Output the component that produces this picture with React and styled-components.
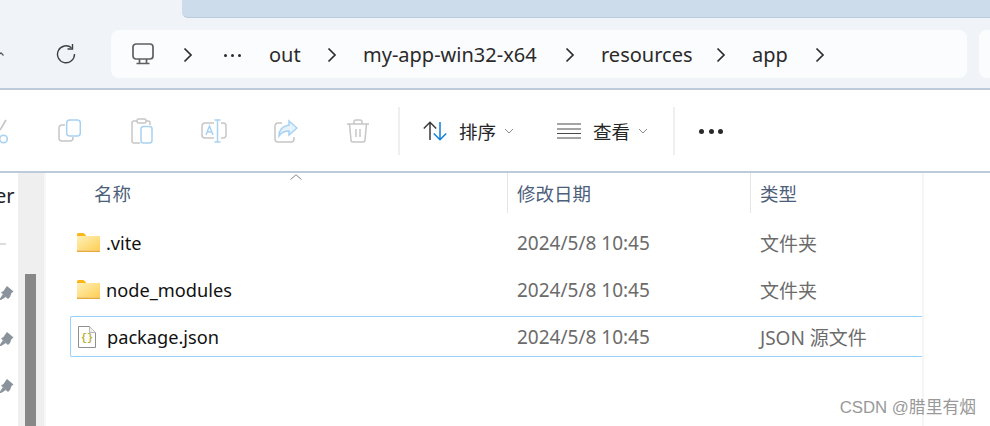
import React from 'react';
import styled, { createGlobalStyle } from 'styled-components';

const GlobalStyle = createGlobalStyle`
  html, body {
    margin: 0;
    padding: 0;
    background: #fff;
    overflow: hidden;
  }
  body {
    font-family: "Noto Sans", "Noto Sans CJK SC", sans-serif;
  }
`;

const crumbs = [
  { label: 'out', width: 32 },
  { label: 'my-app-win32-x64', width: 176 },
  { label: 'resources', width: 89 },
  { label: 'app', width: 37 },
];

const files = [
  { name: '.vite', type: '文件夹', kind: 'folder' },
  { name: 'node_modules', type: '文件夹', kind: 'folder' },
  { name: 'package.json', type: 'JSON 源文件', kind: 'json', selected: true },
];

const Chevron = () => (
  <svg width="10" height="16" viewBox="0 0 10 16" fill="none" stroke="#2b2b2b" strokeWidth="1.7">
    <path d="M1.5 1.5 8 8l-6.5 6.5" />
  </svg>
);

const Caret = () => (
  <CaretIcon width="10" height="6" viewBox="0 0 10 6" fill="none" stroke="#8a8a8a" strokeWidth="1">
    <path d="M1 1l4 4 4-4" />
  </CaretIcon>
);

const Folder = ({ id }) => (
  <svg width="23" height="19" viewBox="0 0 23 19">
    <defs>
      <linearGradient id={id} x1="0" y1="0" x2="1" y2="1">
        <stop offset="0" stopColor="#fff0b8" />
        <stop offset="1" stopColor="#fdcf55" />
      </linearGradient>
    </defs>
    <path d="M0 1.5A1.5 1.5 0 0 1 1.5 0h5L9 2.5V5H0z" fill="#fbb515" />
    <rect y="3" width="23" height="14.500" fill={`url(#${id})`} />
    <rect y="17.500" width="23" height="1.500" fill="#e9a83a" />
  </svg>
);

const JsonFile = () => (
  <svg width="18" height="22" viewBox="0 0 18 22">
    <path d="M.5.5h11l6 6v15H.5z" fill="#fff" stroke="#8f8f8f" />
    <path d="M11.5.5v6h6" fill="#f0f0f0" stroke="#b5b5b5" />
    <text x="9" y="15" textAnchor="middle" fontSize="10" fontWeight="700" fontFamily="Liberation Mono, monospace" fill="#b8b33a">{'{}'}</text>
  </svg>
);

const Pin = () => (
  <svg width="14" height="15" viewBox="0 0 14 15" fill="#8a939b">
    <path d="M7 0 13.500 5.500 11.500 7 10 11 8 13 1 6.500 3.500 5 5.500 2z" />
    <path d="M3 8-1 14h2l5-3z" />
  </svg>
);

const Cut = () => (
  <svg width="24" height="26" viewBox="0 0 24 26" fill="none" strokeWidth="1.6">
    <path d="M20 2l-6 10" stroke="#c4c4c4" />
    <circle cx="17.500" cy="21" r="3.800" stroke="#a8d2f3" />
  </svg>
);

const Copy = () => (
  <svg width="24" height="24" viewBox="0 0 24 24" fill="none" strokeWidth="1.5">
    <path d="M7 6H4a3 3 0 0 0-3 3v10a3 3 0 0 0 3 3h8a3 3 0 0 0 3-3v-1" stroke="#c6c6c6" />
    <rect x="8.700" y="1" width="13.600" height="16" rx="3" stroke="#a8d2f3" fill="#fff" />
  </svg>
);

const Paste = () => (
  <svg width="22" height="26" viewBox="0 0 22 26" fill="none" strokeWidth="1.5">
    <path d="M6 3H3a2 2 0 0 0-2 2v18a2 2 0 0 0 2 2h6M15 3h2a2 2 0 0 1 2 2v2" stroke="#c6c6c6" />
    <rect x="6" y="1" width="9" height="4" rx="1.500" stroke="#c6c6c6" />
    <rect x="10" y="8.500" width="11" height="16.500" rx="2.500" stroke="#a8d2f3" fill="#fff" />
  </svg>
);

const Rename = () => (
  <svg width="26" height="24" viewBox="0 0 26 24" fill="none" strokeWidth="1.5">
    <path d="M13 4H4a3 3 0 0 0-3 3v9a3 3 0 0 0 3 3h9M20 4h2a3 3 0 0 1 3 3v9a3 3 0 0 1-3 3h-2" stroke="#c6c6c6" />
    <path d="M16.500 1v22M13.500 1h6M13.500 23h6M5 16l3.500-9 3.500 9M6.200 13h4.600" stroke="#a8d2f3" />
  </svg>
);

const Share = () => (
  <svg width="24" height="24" viewBox="0 0 24 24" fill="none" strokeWidth="1.5">
    <path d="M8 4H4a3 3 0 0 0-3 3v13a3 3 0 0 0 3 3h13a3 3 0 0 0 3-3v-2" stroke="#c6c6c6" />
    <path d="M15 2l8 7-8 7v-4c-5 0-8 2-10 5 0-6 4-10 10-11z" stroke="#a8d2f3" fill="#e6f2fc" />
  </svg>
);

const Trash = () => (
  <svg width="22" height="24" viewBox="0 0 22 24" fill="none" stroke="#c6c6c6" strokeWidth="1.5">
    <path d="M0 5h22M7 5V3a2 2 0 0 1 2-2h4a2 2 0 0 1 2 2v2M2.500 5l1.500 16a2 2 0 0 0 2 2h10a2 2 0 0 0 2-2l1.500-16M9 10v8M13 10v8" />
  </svg>
);

const Sort = () => (
  <svg width="24" height="20" viewBox="0 0 24 20" fill="none" strokeWidth="1.5">
    <path d="M7 19V1.500M.8 7.500 7 1.200l6.200 6.300" stroke="#3a3a3a" />
    <path d="M17 1v17.500M10.800 12.500 17 18.800l6.200-6.300" stroke="#0f7fd8" />
  </svg>
);

const Lines = () => (
  <svg width="24" height="16" viewBox="0 0 24 16" fill="none" stroke="#4a4a4a" strokeWidth="1.2">
    <path d="M0 1h24M0 6h24M0 10.500h24M0 15h24" />
  </svg>
);

const App = () => {
  return (
    <Page>
      <GlobalStyle />
      <TopBand>
        <TabStrip />
        <NavRow>
          <BackTip>
            <svg width="4" height="4" viewBox="0 0 4 4" fill="none" stroke="#555" strokeWidth="1.2">
              <path d="M-2 3.500 1 .8 3.500 3.500" />
            </svg>
          </BackTip>
          <Refresh>
            <svg width="20" height="20" viewBox="0 0 20 20" fill="none" stroke="#3f3f3f" strokeWidth="1.4">
              <path d="M15.500 3.800A8.500 8.500 0 1 0 18.500 10" />
              <path d="M16.500 0v5h-5" />
            </svg>
          </Refresh>
          <AddressBar>
            <MonitorIcon width="22" height="22" viewBox="0 0 22 22" fill="none" stroke="#5f5f5f" strokeWidth="1.700">
              <rect x="1" y="1" width="20" height="15" rx="3" />
              <path d="M7.500 16v4M14.500 16v4M4.500 20.500h13" />
            </MonitorIcon>
            <RootChevron>
              <Chevron />
            </RootChevron>
            <Dots>
              <i /><i /><i />
            </Dots>
            {crumbs.map((crumb) => (
              <React.Fragment key={crumb.label}>
                <Crumb $width={crumb.width}>{crumb.label}</Crumb>
                <Chevron />
              </React.Fragment>
            ))}
          </AddressBar>
          <SearchBox />
        </NavRow>
      </TopBand>

      <Toolbar>
        <IconButton><Cut /></IconButton>
        <IconButton><Copy /></IconButton>
        <IconButton><Paste /></IconButton>
        <IconButton><Rename /></IconButton>
        <IconButton><Share /></IconButton>
        <IconButton><Trash /></IconButton>
        <Separator />
        <MenuButton $width={134}><Sort /><MenuLabel>排序</MenuLabel><Caret /></MenuButton>
        <MenuButton $width={116}><Lines /><MenuLabel>查看</MenuLabel><Caret /></MenuButton>
        <Separator $flush />
        <More>
          <i /><i /><i />
        </More>
      </Toolbar>

      <Body>
        <Sidebar>
          <SideList>
            <SideText>er</SideText>
            <SideDash />
            <PinRow><Pin /></PinRow>
            <PinRow><Pin /></PinRow>
            <PinRow><Pin /></PinRow>
          </SideList>
          <ScrollTrack>
            <ScrollThumb />
          </ScrollTrack>
        </Sidebar>

        <FilePane>
          <HeaderRow>
            <HeaderCell>名称</HeaderCell>
            <HeaderCell $divided>修改日期</HeaderCell>
            <HeaderCell $divided>类型</HeaderCell>
            <SortMark>
              <svg width="12" height="6" viewBox="0 0 12 6" fill="none" stroke="#8a8a8a">
                <path d="M.5 5.500 6 .8l5.500 4.700" />
              </svg>
            </SortMark>
          </HeaderRow>
          {files.map((file) => (
            <FileRow key={file.name} $selected={file.selected}>
              <NameCell>
                <FileIcon>
                  {file.kind === 'folder' ? <Folder id={`folder-${file.name}`} /> : <JsonFile />}
                </FileIcon>
                {file.name}
              </NameCell>
              <DateCell>2024/5/8 10:45</DateCell>
              <TypeCell>{file.type}</TypeCell>
            </FileRow>
          ))}
        </FilePane>
      </Body>

      <Watermark>CSDN @腊里有烟</Watermark>
    </Page>
  );
};

export default App;

const Page = styled.div`
  position: relative;
  width: 990px;
  height: 426px;
  overflow: hidden;
  background: #fff;
  display: flex;
  flex-direction: column;
`;

const TopBand = styled.div`
  height: 88px;
  flex: none;
  background: #f0f4f9;
  border-bottom: 2px solid #bccada;
`;

const TabStrip = styled.div`
  height: 17px;
  margin-left: 182px;
  background: #cddcea;
  border-bottom: 1px solid #bccbdc;
  border-bottom-left-radius: 6px;
`;

const NavRow = styled.div`
  display: flex;
  align-items: center;
  height: 48px;
  margin-top: 12px;
`;

const BackTip = styled.div`
  width: 56px;
  flex: none;
  display: flex;
  align-items: center;
`;

const Refresh = styled.div`
  width: 55px;
  height: 20px;
  flex: none;
  display: flex;
`;

const AddressBar = styled.div`
  width: 856px;
  height: 48px;
  flex: none;
  box-sizing: border-box;
  padding: 2px 0 0 21px;
  background: #fbfcfe;
  border-radius: 8px;
  display: flex;
  align-items: center;
  gap: 26px;
`;

const MonitorIcon = styled.svg`
  margin-bottom: 2px;
`;

const RootChevron = styled.span`
  display: flex;
  margin-left: 3px;
`;

const Dots = styled.div`
  width: 17px;
  margin: 0 2px 0 5px;
  display: flex;
  justify-content: space-between;
  i {
    width: 3px;
    height: 3px;
    border-radius: 50%;
    background: #2b2b2b;
  }
`;

const Crumb = styled.span`
  width: ${(p) => p.$width}px;
  flex: none;
  font-size: 20px;
  line-height: 46px;
  color: #2a2a2a;
  white-space: nowrap;
`;

const SearchBox = styled.div`
  width: 40px;
  height: 48px;
  flex: none;
  margin-left: 12px;
  background: #fbfcfe;
  border-radius: 8px;
`;

const Toolbar = styled.div`
  height: 83px;
  flex: none;
  box-sizing: border-box;
  margin-left: -38px;
  border-bottom: 2px solid #bccada;
  display: flex;
  align-items: center;
`;

const IconButton = styled.div`
  width: 72px;
  flex: none;
  display: flex;
  justify-content: center;
  align-items: center;
`;

const Separator = styled.div`
  width: 2px;
  height: 48px;
  flex: none;
  margin: 0 ${(p) => (p.$flush ? '24px' : '23px')} 0 ${(p) => (p.$flush ? '0' : '4px')};
  background: #efefef;
`;

const MenuButton = styled.div`
  width: ${(p) => p.$width}px;
  flex: none;
  display: flex;
  align-items: center;
`;

const MenuLabel = styled.span`
  margin-left: 12px;
  font-size: 18.5px;
  color: #262626;
  font-family: "Noto Sans CJK SC", sans-serif;
`;

const CaretIcon = styled.svg`
  margin-left: 8px;
`;

const More = styled.div`
  width: 24px;
  margin-top: 2px;
  display: flex;
  justify-content: space-between;
  i {
    width: 5px;
    height: 5px;
    border-radius: 50%;
    background: #2a2a2a;
  }
`;

const Body = styled.div`
  flex: 1;
  display: flex;
  min-height: 0;
`;

const Sidebar = styled.div`
  width: 46px;
  flex: none;
  box-sizing: border-box;
  display: flex;
  border-right: 2px solid #f7f7f7;
`;

const SideList = styled.div`
  width: 18px;
  flex: none;
  overflow: hidden;
  display: flex;
  flex-direction: column;
`;

const SideText = styled.div`
  height: 48px;
  margin-left: -5px;
  font-size: 20px;
  line-height: 46px;
  color: #222;
`;

const SideDash = styled.div`
  width: 6px;
  height: 2px;
  margin: 23px 0 41px;
  background: #dddddd;
`;

const PinRow = styled.div`
  height: 48px;
  display: flex;
  align-items: flex-start;
  svg {
    display: block;
  }
`;

const ScrollTrack = styled.div`
  width: 26px;
  flex: none;
  box-sizing: border-box;
  padding: 101px 8px 0 7px;
  background: #efefef;
`;

const ScrollThumb = styled.div`
  height: 100%;
  background: #888888;
`;

const FilePane = styled.div`
  width: 878px;
  flex: none;
  box-sizing: border-box;
  padding-left: 22px;
  border-right: 2px solid #f5f5f5;
  display: flex;
  flex-direction: column;
`;

const HeaderRow = styled.div`
  position: relative;
  height: 40px;
  flex: none;
  margin-bottom: 6px;
  display: grid;
  grid-template-columns: 439px 243px 172px;
`;

const HeaderCell = styled.div`
  display: flex;
  align-items: center;
  box-sizing: border-box;
  padding-left: ${(p) => (p.$divided ? '9px' : '26px')};
  border-left: ${(p) => (p.$divided ? '1px solid #e5e5e5' : 'none')};
  font-family: "Noto Sans CJK SC", sans-serif;
  font-size: 18.5px;
  color: #4c607a;
`;

const SortMark = styled.div`
  position: absolute;
  left: 222px;
  top: 1px;
  line-height: 0;
`;

const FileRow = styled.div`
  height: 47px;
  flex: none;
  box-sizing: border-box;
  margin-left: 2px;
  width: 852px;
  display: grid;
  grid-template-columns: 437px 243px 172px;
  align-items: center;
  ${(p) => p.$selected && `
    height: 41px;
    margin-top: 3px;
    grid-template-columns: 436px 243px 172px;
    border: 1px solid #99d1ff;
    border-right: none;
    border-radius: 2px 0 0 2px;
  `}
`;

const NameCell = styled.div`
  display: flex;
  align-items: center;
  font-size: 18.2px;
  color: #111;
`;

const FileIcon = styled.span`
  width: 29px;
  margin-left: 7px;
  display: flex;
  align-items: center;
  svg {
    display: block;
  }
`;

const DateCell = styled.div`
  padding-left: 10px;
  font-size: 19px;
  color: #6b6b6b;
`;

const TypeCell = styled(DateCell)``;

const Watermark = styled.div`
  position: absolute;
  right: 14px;
  bottom: 6px;
  font-family: "Liberation Sans", "Noto Sans CJK SC", sans-serif;
  font-size: 16.8px;
  line-height: 24px;
  color: #999;
`;
